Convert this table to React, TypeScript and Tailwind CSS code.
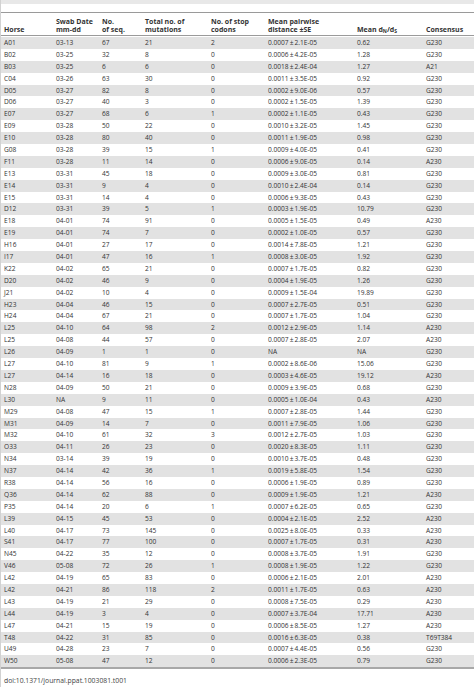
const rows: string[][] = [
  ["A01", "03-13", "67", "21", "2", "0.0007", "2.1E-05", "0.62", "G230"],
  ["B02", "03-25", "32", "8", "0", "0.0006", "4.2E-05", "1.28", "G230"],
  ["B03", "03-25", "6", "6", "0", "0.0018", "2.4E-04", "1.27", "A21"],
  ["C04", "03-26", "63", "30", "0", "0.0011", "3.5E-05", "0.92", "G230"],
  ["D05", "03-27", "82", "8", "0", "0.0002", "9.0E-06", "0.57", "G230"],
  ["D06", "03-27", "40", "3", "0", "0.0002", "1.5E-05", "1.39", "G230"],
  ["E07", "03-27", "68", "6", "1", "0.0002", "1.1E-05", "0.43", "G230"],
  ["E09", "03-28", "50", "22", "0", "0.0010", "3.2E-05", "1.45", "G230"],
  ["E10", "03-28", "80", "40", "0", "0.0011", "1.9E-05", "0.98", "G230"],
  ["G08", "03-28", "39", "15", "1", "0.0009", "4.0E-05", "0.41", "G230"],
  ["F11", "03-28", "11", "14", "0", "0.0006", "9.0E-05", "0.14", "A230"],
  ["E13", "03-31", "45", "18", "0", "0.0009", "3.0E-05", "0.81", "G230"],
  ["E14", "03-31", "9", "4", "0", "0.0010", "2.4E-04", "0.14", "G230"],
  ["E15", "03-31", "14", "4", "0", "0.0006", "9.3E-05", "0.43", "G230"],
  ["D12", "03-31", "39", "5", "1", "0.0003", "1.9E-05", "10.79", "G230"],
  ["E18", "04-01", "74", "91", "0", "0.0005", "1.5E-05", "0.49", "A230"],
  ["E19", "04-01", "74", "7", "0", "0.0002", "1.0E-05", "0.57", "G230"],
  ["H16", "04-01", "27", "17", "0", "0.0014", "7.8E-05", "1.21", "G230"],
  ["I17", "04-01", "47", "16", "1", "0.0008", "3.0E-05", "1.92", "G230"],
  ["K22", "04-02", "65", "21", "0", "0.0007", "1.7E-05", "0.82", "G230"],
  ["D20", "04-02", "46", "9", "0", "0.0004", "1.9E-05", "1.26", "G230"],
  ["J21", "04-02", "10", "4", "0", "0.0009", "1.5E-04", "19.89", "G230"],
  ["H23", "04-04", "46", "15", "0", "0.0007", "2.7E-05", "0.51", "G230"],
  ["H24", "04-04", "67", "21", "0", "0.0007", "1.7E-05", "1.04", "G230"],
  ["L25", "04-10", "64", "98", "2", "0.0012", "2.9E-05", "1.14", "A230"],
  ["L25", "04-08", "44", "57", "0", "0.0007", "2.8E-05", "2.07", "A230"],
  ["L26", "04-09", "1", "1", "0", "NA", "", "NA", "G230"],
  ["L27", "04-10", "81", "9", "1", "0.0002", "8.6E-06", "15.06", "G230"],
  ["L27", "04-14", "16", "18", "0", "0.0003", "4.6E-05", "19.12", "A230"],
  ["N28", "04-09", "50", "21", "0", "0.0009", "3.9E-05", "0.68", "G230"],
  ["L30", "NA", "9", "11", "0", "0.0005", "1.0E-04", "0.43", "A230"],
  ["M29", "04-08", "47", "15", "1", "0.0007", "2.8E-05", "1.44", "G230"],
  ["M31", "04-09", "14", "7", "0", "0.0011", "7.9E-05", "1.06", "G230"],
  ["M32", "04-10", "61", "32", "3", "0.0012", "2.7E-05", "1.03", "G230"],
  ["O33", "04-11", "26", "23", "0", "0.0020", "8.3E-05", "1.11", "G230"],
  ["N34", "03-14", "39", "19", "0", "0.0010", "3.7E-05", "0.48", "G230"],
  ["N37", "04-14", "42", "36", "1", "0.0019", "5.8E-05", "1.54", "G230"],
  ["R38", "04-14", "56", "16", "0", "0.0006", "1.9E-05", "0.89", "G230"],
  ["Q36", "04-14", "62", "88", "0", "0.0009", "1.9E-05", "1.21", "A230"],
  ["P35", "04-14", "20", "6", "1", "0.0007", "6.2E-05", "0.65", "G230"],
  ["L39", "04-15", "45", "53", "0", "0.0004", "2.1E-05", "2.52", "A230"],
  ["L40", "04-17", "73", "145", "0", "0.0025", "8.0E-05", "0.33", "A230"],
  ["S41", "04-17", "77", "100", "0", "0.0007", "1.7E-05", "0.31", "A230"],
  ["N45", "04-22", "35", "12", "0", "0.0008", "3.7E-05", "1.91", "G230"],
  ["V46", "05-08", "72", "26", "1", "0.0008", "1.9E-05", "1.22", "G230"],
  ["L42", "04-19", "65", "83", "0", "0.0006", "2.1E-05", "2.01", "A230"],
  ["L42", "04-21", "86", "118", "2", "0.0011", "1.7E-05", "0.63", "A230"],
  ["L43", "04-19", "21", "29", "0", "0.0008", "7.5E-05", "0.29", "A230"],
  ["L44", "04-19", "3", "4", "0", "0.0007", "3.7E-04", "17.71", "A230"],
  ["L47", "04-21", "15", "19", "0", "0.0006", "8.5E-05", "1.27", "A230"],
  ["T48", "04-22", "31", "85", "0", "0.0016", "6.3E-05", "0.38", "T69T384"],
  ["U49", "04-28", "23", "7", "0", "0.0007", "4.4E-05", "0.56", "G230"],
  ["W50", "05-08", "47", "12", "0", "0.0006", "2.3E-05", "0.79", "G230"],
];

const GRID = "grid grid-cols-[52px_46px_43px_66px_57px_89px_69px_1fr] pl-[3px]";

export default function App() {
  return (
    <div className="w-[474px] h-[687px] bg-white border-l border-[#d2d2d2] font-['Open_Sans',sans-serif] text-[#333] overflow-hidden">
      {/* bandeau du haut */}
      <div className="h-[4px] bg-[#e8e8e8]" />
      <div className="h-[8px]" />
      <div className="border-t border-[#9a9a9a]" />

      {/* en-tête */}
      <div className={`${GRID} h-[22px] items-end pb-[2px] text-[7px] leading-[7.5px] font-bold text-[#333]`}>
        <div>Horse</div>
        <div>Swab Date<br />mm-dd</div>
        <div>No.<br />of seq.</div>
        <div>Total no. of<br />mutations</div>
        <div>No. of stop<br />codons</div>
        <div>Mean pairwise<br />distance ±SE</div>
        <div>
          Mean d<sub className="text-[5px]">N</sub>/d<sub className="text-[5px]">S</sub>
        </div>
        <div>Consensus</div>
      </div>
      <div className="border-t border-[#9a9a9a] mb-[1px]" />

      {/* lignes */}
      <div>
        {rows.map((r, i) => (
          <div
            key={i}
            className={`${GRID} h-[11.9px] items-center text-[6.6px] ${i % 2 === 0 ? "bg-[#e2e2e2]" : "bg-white"}`}
          >
            <div>{r[0]}</div>
            <div>{r[1]}</div>
            <div>{r[2]}</div>
            <div>{r[3]}</div>
            <div>{r[4]}</div>
            <div>{r[6] ? `${r[5]}\u2009±\u2009${r[6]}` : r[5]}</div>
            <div>{r[7]}</div>
            <div>{r[8]}</div>
          </div>
        ))}
      </div>
      <div className="h-[2px] bg-[#a8a8a8]" />

      {/* référence */}
      <div className="pl-[3px] pt-[7px] text-[6.8px] text-[#444]">doi:10.1371/journal.ppat.1003081.t001</div>
    </div>
  );
}
